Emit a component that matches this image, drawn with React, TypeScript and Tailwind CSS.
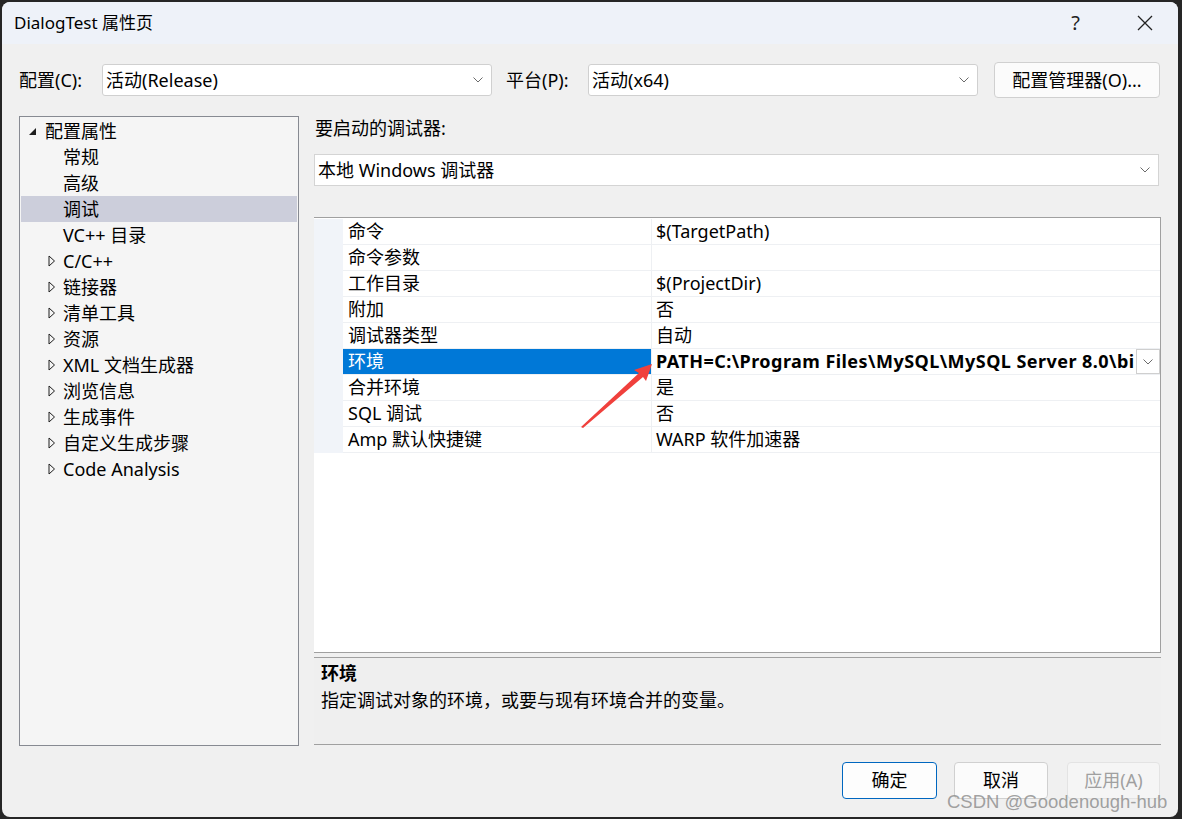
const font = "font-['Noto_Sans','Noto_Sans_CJK_SC',sans-serif]";

const treeItems: { label: string; kind: "open" | "leaf" | "closed"; selected?: boolean }[] = [
  { label: "配置属性", kind: "open" },
  { label: "常规", kind: "leaf" },
  { label: "高级", kind: "leaf" },
  { label: "调试", kind: "leaf", selected: true },
  { label: "VC++ 目录", kind: "leaf" },
  { label: "C/C++", kind: "closed" },
  { label: "链接器", kind: "closed" },
  { label: "清单工具", kind: "closed" },
  { label: "资源", kind: "closed" },
  { label: "XML 文档生成器", kind: "closed" },
  { label: "浏览信息", kind: "closed" },
  { label: "生成事件", kind: "closed" },
  { label: "自定义生成步骤", kind: "closed" },
  { label: "Code Analysis", kind: "closed" },
];

// the value is shown cut off by the dropdown in the dialog, so only the visible part is kept
const props: { name: string; value: string; selected?: boolean }[] = [
  { name: "命令", value: "$(TargetPath)" },
  { name: "命令参数", value: "" },
  { name: "工作目录", value: "$(ProjectDir)" },
  { name: "附加", value: "否" },
  { name: "调试器类型", value: "自动" },
  { name: "环境", value: "PATH=C:\\Program Files\\MySQL\\MySQL Server 8.0\\bi", selected: true },
  { name: "合并环境", value: "是" },
  { name: "SQL 调试", value: "否" },
  { name: "Amp 默认快捷键", value: "WARP 软件加速器" },
];

function Chevron({ className = "" }: { className?: string }) {
  return (
    <svg className={className} width="12" height="8" viewBox="0 0 12 8" fill="none">
      <path d="M1.5 1.5 L6 6 L10.5 1.5" stroke="#6b6b6b" strokeWidth="1" />
    </svg>
  );
}

function Combo({ text, width }: { text: string; width: string }) {
  return (
    <div
      className={`${width} flex h-[32px] items-center justify-between rounded-[3px] border border-[#d0d0d0] bg-white pl-[3px] pr-[7px] text-[18px] leading-none text-black`}
    >
      <span>{text}</span>
      <Chevron />
    </div>
  );
}

function Expander({ kind }: { kind: "open" | "leaf" | "closed" }) {
  if (kind === "open") {
    return (
      <svg width="9" height="9" viewBox="0 0 9 9" className="ml-[7px] mr-[8px]">
        <path d="M8 1 L8 8 L1 8 Z" fill="#1e1e1e" />
      </svg>
    );
  }
  if (kind === "closed") {
    return (
      <svg width="8" height="12" viewBox="0 0 8 12" className="ml-[27px] mr-[7px]">
        <path d="M1 1 L6.5 6 L1 11 Z" fill="none" stroke="#1e1e1e" strokeWidth="1" />
      </svg>
    );
  }
  return <span className="ml-[42px] inline-block" />;
}

function Button({ label, width, primary, disabled }: { label: string; width: string; primary?: boolean; disabled?: boolean }) {
  return (
    <div
      className={`${width} flex h-[37px] items-center justify-center rounded-[4px] text-[18px] ${
        primary
          ? "border-[1.5px] border-[#0067c0] bg-[#fdfdfd] text-black"
          : disabled
            ? "border border-[#e3e3e3] bg-[#f5f5f5] text-[#a0a0a0]"
            : "border border-[#d0d0d0] bg-[#fbfbfb] text-black"
      }`}
    >
      {label}
    </div>
  );
}

export default function App() {
  return (
    <div className={`${font} h-[819px] w-[1182px] bg-[#262626] pb-[2px] pl-[2px] pr-[4px] pt-[2px]`}>
      <div className="relative flex h-full flex-col overflow-hidden rounded-[8px] bg-[#f0f0f0]">
        {/* title bar */}
        <div className="flex h-[42px] items-center bg-[#eef2f9] pl-[12px] text-[17px] text-black">
          <span>DialogTest 属性页</span>
          <span className="ml-auto mr-[57px] text-[20px] text-[#222]">?</span>
          <svg width="16" height="16" viewBox="0 0 16 16" className="mr-[25px]">
            <path d="M1 1 L15 15 M15 1 L1 15" stroke="#222" strokeWidth="1.3" />
          </svg>
        </div>

        {/* configuration row */}
        <div className="mt-[18px] flex h-[36px] items-center pl-[17px] text-[18px] text-black">
          <span className="w-[83px]">配置(C):</span>
          <Combo text="活动(Release)" width="w-[390px]" />
          <span className="ml-[14px] w-[82px]">平台(P):</span>
          <Combo text="活动(x64)" width="w-[390px]" />
          <div className="ml-[16px] flex h-[36px] w-[166px] items-center justify-center rounded-[4px] border border-[#d0d0d0] bg-[#fbfbfb]">
            配置管理器(O)...
          </div>
        </div>

        {/* main area */}
        <div className="mt-[18px] flex h-[629px] pl-[17px]">
          {/* tree */}
          <div className="h-[630px] w-[280px] border border-[#878a92] bg-[#f5f5f5] p-[1px] text-[18px] text-black">
            {treeItems.map((item) => (
              <div
                key={item.label}
                className={`flex h-[26px] items-center ${item.selected ? "bg-[#cccedb]" : ""}`}
              >
                <Expander kind={item.kind} />
                <span>{item.label}</span>
              </div>
            ))}
          </div>

          {/* right panel */}
          <div className="ml-[15px] flex w-[847px] flex-col text-[18px] text-black">
            <div className="flex h-[24px] items-center pl-[1px]">要启动的调试器:</div>
            <div className="mt-[14px] flex h-[32px] w-[845px] items-center justify-between border border-[#d4d4d4] bg-white pl-[3px] pr-[7px]">
              <span>本地 Windows 调试器</span>
              <Chevron />
            </div>

            {/* property grid */}
            <div className="mt-[31px] h-[436px] border-b border-r border-t border-[#a0a0a0] bg-white pt-[1px]">
              {props.map((p) => (
                <div key={p.name} className="flex h-[26px]">
                  <div className="w-[29px] bg-[#f1f4f9]" />
                  <div
                    className={`flex w-[309px] items-center border-b border-r border-[#eef0f3] pl-[5px] ${
                      p.selected ? "bg-[#0078d7] text-white" : ""
                    }`}
                  >
                    {p.name}
                  </div>
                  <div className="relative flex min-w-0 flex-1 items-center border-b border-[#eef0f3] pl-[4px]">
                    <span className={`whitespace-nowrap ${p.selected ? "font-bold tracking-[0.45px]" : ""}`}>
                      {p.value}
                    </span>
                    {p.selected && (
                      <div className="absolute right-0 top-0 flex h-[25px] w-[24px] items-center justify-center border border-[#cfcfcf] bg-white">
                        <Chevron />
                      </div>
                    )}
                  </div>
                </div>
              ))}
            </div>

            {/* description */}
            <div className="mt-[4px] h-[88px] border-b border-t border-[#a0a0a0] bg-[#efefef] pl-[7px] pt-[3px]">
              <div className="flex h-[24px] items-center font-bold">环境</div>
              <div className="mt-[3px] flex h-[24px] items-center">指定调试对象的环境，或要与现有环境合并的变量。</div>
            </div>
          </div>
        </div>

        {/* buttons */}
        <div className="mt-[17px] flex justify-end pr-[18px]">
          <Button label="确定" width="w-[95px]" primary />
          <div className="w-[17px]" />
          <Button label="取消" width="w-[94px]" />
          <div className="w-[19px]" />
          <Button label="应用(A)" width="w-[93px]" disabled />
        </div>

        {/* watermark */}
        <div className="pointer-events-none absolute left-[945px] top-[786px] font-['Liberation_Sans',sans-serif] text-[18.5px] text-[#8a8a8a]/80">
          CSDN @Goodenough-hub
        </div>

        {/* red annotation arrow */}
        <svg className="pointer-events-none absolute left-0 top-0" width="1176" height="815" viewBox="2 2 1176 815">
          <path d="M652 364 L634 370 L639 373 L581 427 L583 428 L643 377 L646 381 Z" fill="#f0403c" />
        </svg>
      </div>
    </div>
  );
}
